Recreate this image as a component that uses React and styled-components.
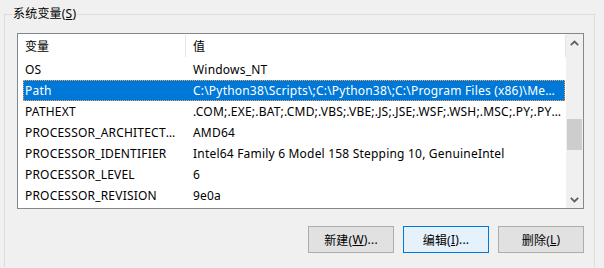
import React from "react";
import styled, { createGlobalStyle } from "styled-components";

const Global = createGlobalStyle`
  html, body { margin: 0; padding: 0; background: #f0f0f0; }
  body {
    width: 604px; height: 268px; overflow: hidden;
    font-family: "Noto Sans", "Noto Sans CJK SC", sans-serif;
    font-size: 12px; color: #000;
  }
`;

const GroupBox = styled.fieldset`
  margin: 6px 0 0 4px;
  width: 591px;
  box-sizing: border-box;
  border: 1px solid #dcdcdc;
  border-bottom: none;
  padding: 0 0 14px 0;
  min-width: 0;
`;

const Legend = styled.legend`
  margin-left: 7px;
  padding: 0 1px;
  line-height: 16px;
  font-size: 12px;
  letter-spacing: 0.2px;
  color: #000;
`;

const ListBox = styled.div`
  margin: 11px 0 0 12px;
  width: 567px;
  height: 176px;
  box-sizing: border-box;
  border: 1px solid #828790;
  background: #fff;
  display: flex;
`;

const ListContent = styled.div`
  flex: 1;
  min-width: 0;
  display: flex;
  flex-direction: column;
  overflow: hidden;
`;

const Header = styled.div`
  height: 25px;
  display: flex;
  align-items: stretch;
  padding-left: 5px;
  flex-shrink: 0;
`;

const HeaderCell = styled.div`
  width: ${(p) => p.$w};
  flex: ${(p) => (p.$grow ? 1 : "none")};
  padding-left: ${(p) => p.$pad}px;
  display: flex;
  align-items: center;
  box-sizing: border-box;
  border-right: 1px solid #e5e5e5;
  margin: 1px 0 2px;
  white-space: nowrap;
`;

const Row = styled.div`
  height: 21px;
  margin-left: 5px;
  margin-right: 1px;
  display: flex;
  align-items: center;
  flex-shrink: 0;
  letter-spacing: 0.2px;
  background: ${(p) => (p.$selected ? "#0078d7" : "transparent")};
  color: ${(p) => (p.$selected ? "#fff" : "#000")};
  outline: ${(p) => (p.$selected ? "1px dotted #f7a14a" : "none")};
  outline-offset: -1px;
`;

const Cell = styled.div`
  width: ${(p) => p.$w};
  flex: ${(p) => (p.$grow ? 1 : "none")};
  min-width: 0;
  padding-left: ${(p) => p.$pad}px;
  padding-right: 4px;
  box-sizing: border-box;
  white-space: nowrap;
  overflow: hidden;
  text-overflow: ellipsis;
`;

const ScrollBar = styled.div`
  width: 17px;
  flex-shrink: 0;
  background: #f0f0f0;
  display: flex;
  flex-direction: column;
  align-items: center;
`;

const ArrowBtn = styled.div`
  height: 17px;
  width: 17px;
  display: flex;
  align-items: center;
  justify-content: center;
`;

const Track = styled.div`
  flex: 1;
  width: 100%;
  display: flex;
  flex-direction: column;
  align-items: center;
`;

const Thumb = styled.div`
  margin-top: ${(p) => p.$top}px;
  width: 15px;
  height: 31px;
  background: #cdcdcd;
`;

const ButtonRow = styled.div`
  display: flex;
  justify-content: flex-end;
  gap: 9px;
  margin: 17px 0 0 0;
  width: 579px;
`;

const Button = styled.button`
  width: 86px;
  height: 27px;
  box-sizing: border-box;
  font-family: "Noto Sans", "Noto Sans CJK SC", sans-serif;
  font-size: 12px;
  letter-spacing: 0.2px;
  color: #000;
  background: ${(p) => (p.$focused ? "#e5f1fb" : "#e1e1e1")};
  border: 1px solid ${(p) => (p.$focused ? "#0078d7" : "#adadad")};
  padding: 0;
  display: flex;
  align-items: center;
  justify-content: center;
`;

const Chevron = ({ up }) => (
  <svg width="9" height="6" viewBox="0 0 9 6">
    <path
      d={up ? "M0.8 5.2 L4.5 1.5 L8.2 5.2" : "M0.8 0.8 L4.5 4.5 L8.2 0.8"}
      fill="none"
      stroke="#606060"
      strokeWidth="1.8"
    />
  </svg>
);

const rows = [
  ["OS", "Windows_NT"],
  ["Path", "C:\\Python38\\Scripts\\;C:\\Python38\\;C:\\Program Files (x86)\\Mearsoft\\bin;C:\\Windows\\system32"],
  ["PATHEXT", ".COM;.EXE;.BAT;.CMD;.VBS;.VBE;.JS;.JSE;.WSF;.WSH;.MSC;.PY;.PYW"],
  ["PROCESSOR_ARCHITECTURE", "AMD64"],
  ["PROCESSOR_IDENTIFIER", "Intel64 Family 6 Model 158 Stepping 10, GenuineIntel"],
  ["PROCESSOR_LEVEL", "6"],
  ["PROCESSOR_REVISION", "9e0a"],
];

export default function App() {
  return (
    <>
      <Global />
      <GroupBox>
        <Legend>
          系统变量(<u>S</u>)
        </Legend>
        <ListBox>
          <ListContent>
            <Header>
              <HeaderCell $w="163px" $pad={2}>变量</HeaderCell>
              <HeaderCell $grow $pad={7}>值</HeaderCell>
            </Header>
            {rows.map(([k, v], i) => (
              <Row key={k} $selected={i === 1}>
                <Cell $w="163px" $pad={2}>{k}</Cell>
                <Cell $grow $pad={7}>{v}</Cell>
              </Row>
            ))}
          </ListContent>
          <ScrollBar>
            <ArrowBtn><Chevron up /></ArrowBtn>
            <Track>
              <Thumb $top={68} />
            </Track>
            <ArrowBtn><Chevron /></ArrowBtn>
          </ScrollBar>
        </ListBox>
        <ButtonRow>
          <Button>新建(<u>W</u>)...</Button>
          <Button $focused>编辑(<u>I</u>)...</Button>
          <Button>删除(<u>L</u>)</Button>
        </ButtonRow>
      </GroupBox>
    </>
  );
}
